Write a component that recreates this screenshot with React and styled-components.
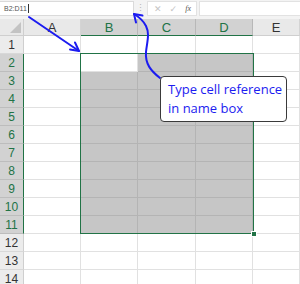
import React from 'react'
import styled, { createGlobalStyle } from 'styled-components'

const GlobalStyle = createGlobalStyle`
  html, body {
    margin: 0;
    padding: 0;
    background: #ffffff;
    overflow: hidden;
  }
  body {
    font-family: "Liberation Sans", Arial, sans-serif;
  }
`

const cols = ['A', 'B', 'C', 'D', 'E']
const rows = Array.from({ length: 14 }, (_, i) => i + 1)
const selCols = ['B', 'C', 'D']
const inSel = (c, r) => selCols.includes(c) && r >= 2 && r <= 11

export default function App() {
  return (
    <Page>
      <GlobalStyle />
      <FormulaBar>
        <NameBox>
          B2:D11<Caret />
        </NameBox>
        <Dots>⋮</Dots>
        <FxButtons>
          <IconBtn>✕</IconBtn>
          <IconBtn>✓</IconBtn>
          <IconBtn $italic>fx</IconBtn>
        </FxButtons>
        <FormulaInput />
      </FormulaBar>

      <Sheet>
        <Corner>
          <CornerTriangle />
        </Corner>
        {cols.map((c) => (
          <ColHeader key={c} $selected={selCols.includes(c)}>
            {c}
          </ColHeader>
        ))}
        {rows.map((r) => (
          <React.Fragment key={r}>
            <RowHeader $selected={r >= 2 && r <= 11}>{r}</RowHeader>
            {cols.map((c) => (
              <Cell key={c} $shaded={inSel(c, r) && !(c === 'B' && r === 2)} />
            ))}
          </React.Fragment>
        ))}
      </Sheet>

      <Selection />
      <FillHandle />

      <Arrows width="300" height="284" viewBox="0 0 300 284">
        <g fill="none" stroke="#1c1cf0" strokeWidth="2" strokeLinecap="round" strokeLinejoin="round">
          <path d="M29 17 L79 51" />
          <path d="M79 51 L70 49.5 M79 51 L75 42.5" />
          <path d="M160 78 C151 71 145 64 146 52 C147 42 150 34 146 26 C143 20 139 17 134 14" />
          <path d="M134 14 L136 22.5 M134 14 L142.5 15.5" />
        </g>
      </Arrows>

      <Callout>
        Type cell reference
        <br />
        in name box
      </Callout>
    </Page>
  )
}

const Page = styled.div`
  position: relative;
  width: 300px;
  height: 284px;
  overflow: hidden;
  background: #ffffff;
`

const FormulaBar = styled.div`
  height: 19px;
  display: flex;
  align-items: flex-start;
  padding-top: 1px;
  box-sizing: border-box;
  background: #f3f3f3;
`

const NameBox = styled.div`
  width: 134px;
  height: 15px;
  box-sizing: border-box;
  background: #ffffff;
  border: 1px solid #dadada;
  border-left: none;
  font-size: 7px;
  color: #555;
  padding-left: 4px;
  display: flex;
  align-items: center;
`

const Caret = styled.span`
  display: inline-block;
  width: 1px;
  height: 9px;
  background: #333;
  margin-left: 1px;
`

const Dots = styled.div`
  width: 12px;
  text-align: center;
  font-size: 9px;
  line-height: 15px;
  color: #b5b5b5;
`

const FxButtons = styled.div`
  width: 50px;
  height: 15px;
  margin-left: 1px;
  box-sizing: border-box;
  background: #ffffff;
  border: 1px solid #e2e2e2;
  display: flex;
  align-items: center;
  justify-content: space-between;
  padding: 0 5px 0 6px;
`

const IconBtn = styled.span`
  font-size: ${(p) => (p.$italic ? '8px' : '9px')};
  color: ${(p) => (p.$italic ? '#555' : '#c4c4c4')};
  font-style: ${(p) => (p.$italic ? 'italic' : 'normal')};
  font-family: ${(p) => (p.$italic ? '"Liberation Serif", serif' : '"DejaVu Sans", sans-serif')};
`

const FormulaInput = styled.div`
  flex: 1;
  height: 15px;
  margin-left: 2px;
  box-sizing: border-box;
  background: #ffffff;
  border: 1px solid #e2e2e2;
  border-right: none;
`

const Sheet = styled.div`
  display: grid;
  grid-template-columns: 24px 57px 57px 58px 57px 47px;
  grid-template-rows: 17px repeat(14, 18px);
  font-family: "Liberation Sans", Arial, sans-serif;
`

const HeaderBase = styled.div`
  box-sizing: border-box;
  display: flex;
  align-items: center;
  justify-content: center;
  font-size: 12px;
  border-right: 1px solid #cfcfcf;
  border-bottom: 1px solid #cfcfcf;
`

const Corner = styled(HeaderBase)`
  background: #e9e9e9;
  position: relative;
  border-right: 1px solid #cfcfcf;
`

const CornerTriangle = styled.div`
  position: absolute;
  right: 2px;
  bottom: 2px;
  width: 0;
  height: 0;
  border-left: 11px solid transparent;
  border-bottom: 11px solid #c3c3c3;
`

const ColHeader = styled(HeaderBase)`
  background: ${(p) => (p.$selected ? '#d2d2d2' : '#e9e9e9')};
  color: ${(p) => (p.$selected ? '#217346' : '#333')};
  border-right-color: ${(p) => (p.$selected ? '#b8b8b8' : '#d4d4d4')};
  border-bottom: ${(p) => (p.$selected ? '1px solid #217346' : '1px solid #cfcfcf')};
  font-size: 13px;
  padding-top: 1px;
`

const RowHeader = styled(HeaderBase)`
  background: ${(p) => (p.$selected ? '#d2d2d2' : '#ececec')};
  color: ${(p) => (p.$selected ? '#217346' : '#333')};
  border-right: ${(p) => (p.$selected ? '1px solid #217346' : '1px solid #cfcfcf')};
  border-bottom-color: ${(p) => (p.$selected ? '#bdbdbd' : '#d8d8d8')};
  font-size: 12px;
`

const Cell = styled.div`
  box-sizing: border-box;
  background: ${(p) => (p.$shaded ? '#c6c6c6' : '#ffffff')};
  border-right: 1px solid ${(p) => (p.$shaded ? '#b4b4b4' : '#e1e1e1')};
  border-bottom: 1px solid ${(p) => (p.$shaded ? '#b4b4b4' : '#e1e1e1')};
`

const Selection = styled.div`
  position: absolute;
  left: 80px;
  top: 53px;
  width: 174px;
  height: 181px;
  box-sizing: border-box;
  border: 1px solid #217346;
  pointer-events: none;
`

const FillHandle = styled.div`
  position: absolute;
  left: 251px;
  top: 231px;
  width: 4px;
  height: 4px;
  background: #217346;
  border: 1px solid #ffffff;
  box-sizing: content-box;
`

const Arrows = styled.svg`
  position: absolute;
  left: 0;
  top: 0;
  pointer-events: none;
`

const Callout = styled.div`
  position: absolute;
  left: 160px;
  top: 76px;
  width: 127px;
  height: 46px;
  box-sizing: border-box;
  background: #ffffff;
  border: 1px solid #3a3a3a;
  border-radius: 4px;
  padding: 3px 0 0 7px;
  font-family: "Open Sans", "Liberation Sans", sans-serif;
  font-size: 13px;
  line-height: 19px;
  color: #1c1cf0;
`
